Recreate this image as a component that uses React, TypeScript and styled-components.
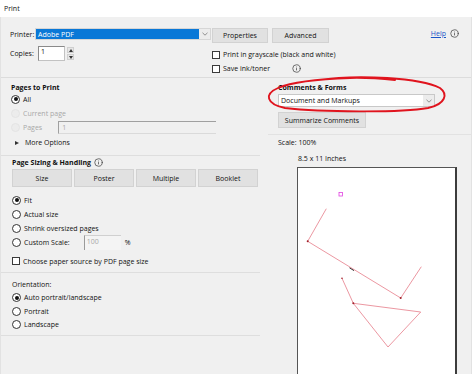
import styled, { createGlobalStyle } from "styled-components";
import { Info } from "lucide-react";

const GlobalStyle = createGlobalStyle`
    body {
        margin: 0;
        background: #ffffff;
        font-family: "Open Sans", "Noto Sans", sans-serif;
        font-size: 7px;
        color: #111111;
    }
`;

const Window = styled.div`
    width: 474px;
    height: 374px;
    position: relative;
    overflow: hidden;
    display: flex;
    flex-direction: column;
`;

const TitleBar = styled.div`
    height: 17px;
    line-height: 17px;
    padding-left: 4px;
`;

const Panel = styled.div`
    flex: 1;
    background: #f0f0f0;
    border-left: 1px solid #e2e2e2;
    border-right: 1px solid #e2e2e2;
    margin-right: 2px;
    display: flex;
    flex-direction: column;
`;

const TopSection = styled.div`
    height: 61px;
    border-bottom: 1px solid #dcdcdc;
    display: flex;
    box-sizing: border-box;
`;

const TopLeft = styled.div`
    width: 211px;
    padding: 11px 0 0 9px;
    box-sizing: border-box;
`;

const TopRight = styled.div`
    flex: 1;
    padding-top: 11px;
`;

const FieldRow = styled.div<{ $h: number; $mt?: number }>`
    display: flex;
    align-items: center;
    height: ${(p) => p.$h}px;
    margin-top: ${(p) => p.$mt || 0}px;
`;

const Label = styled.span<{ $w?: number }>`
    width: ${(p) => (p.$w ? `${p.$w}px` : "auto")};
    flex-shrink: 0;
    white-space: nowrap;
`;

const Select = styled.div<{ $w: number; $h: number; $active?: boolean }>`
    width: ${(p) => p.$w}px;
    height: ${(p) => p.$h}px;
    box-sizing: border-box;
    display: flex;
    align-items: stretch;
    background: #ffffff;
    border: 1px solid ${(p) => (p.$active ? "#d6d6d6" : "#c8c8c8")};
`;

const SelectValue = styled.div<{ $active?: boolean }>`
    flex: 1;
    display: flex;
    align-items: center;
    padding-left: 2px;
    background: ${(p) => (p.$active ? "#0a78d7" : "transparent")};
    color: ${(p) => (p.$active ? "#ffffff" : "#111111")};
    white-space: nowrap;
`;

const SelectArrow = styled.div`
    width: 11px;
    display: flex;
    align-items: center;
    justify-content: center;
    background: #ececec;
`;

const NumberBox = styled.div<{ $w: number; $h: number }>`
    width: ${(p) => p.$w}px;
    height: ${(p) => p.$h}px;
    box-sizing: border-box;
    border: 1px solid #c2c2c2;
    border-top-color: #8a8a8a;
    border-left-color: #8a8a8a;
    background: #ffffff;
    padding: 1px 0 0 2px;
    line-height: 8px;
`;

const Spinner = styled.div`
    display: flex;
    flex-direction: column;
    gap: 1px;
    margin-left: 2px;
`;

const SpinBtn = styled.div`
    width: 7px;
    height: 6px;
    background: #e6e6e6;
    border: 1px solid #cfcfcf;
    box-sizing: border-box;
    display: flex;
    align-items: center;
    justify-content: center;
`;

const Button = styled.div<{ $w: number; $h: number }>`
    width: ${(p) => p.$w}px;
    height: ${(p) => p.$h}px;
    box-sizing: border-box;
    background: #e1e1e1;
    border: 1px solid #d2d2d2;
    display: flex;
    align-items: center;
    justify-content: center;
    white-space: nowrap;
`;

const ButtonRow = styled.div<{ $gap: number }>`
    display: flex;
    align-items: center;
    gap: ${(p) => p.$gap}px;
`;

const HelpLink = styled.a`
    margin-left: auto;
    margin-right: 12px;
    align-self: flex-start;
    margin-top: 1px;
    color: #1a56c8;
    text-decoration: underline;
    display: flex;
    align-items: center;
    gap: 4px;
`;

const CheckList = styled.div`
    margin-top: 7px;
    display: flex;
    flex-direction: column;
    gap: 5px;
`;

const OptionRow = styled.div<{ $h?: number; $mt?: number; $disabled?: boolean }>`
    display: flex;
    align-items: center;
    gap: 3px;
    height: ${(p) => (p.$h ? `${p.$h}px` : "auto")};
    margin-top: ${(p) => p.$mt || 0}px;
    color: ${(p) => (p.$disabled ? "#a8a8a8" : "#111111")};
    white-space: nowrap;
`;

const CheckBox = styled.span`
    width: 8px;
    height: 8px;
    box-sizing: border-box;
    border: 1px solid #3a3a3a;
    background: #ffffff;
    flex-shrink: 0;
`;

const Radio = styled.span<{ $checked?: boolean; $disabled?: boolean }>`
    width: 9px;
    height: 9px;
    box-sizing: border-box;
    border-radius: 50%;
    border: 1px solid ${(p) => (p.$disabled ? "#e4e4e4" : "#333333")};
    background: ${(p) => (p.$disabled ? "#ececec" : "#ffffff")};
    flex-shrink: 0;
    display: flex;
    align-items: center;
    justify-content: center;
    &::after {
        content: "";
        width: 4px;
        height: 4px;
        border-radius: 50%;
        background: ${(p) => (p.$checked ? "#111111" : "transparent")};
    }
`;

const InfoIcon = styled(Info)`
    width: 9px;
    height: 9px;
    color: #444444;
    flex-shrink: 0;
`;

const Body = styled.div`
    flex: 1;
    display: flex;
    min-height: 0;
`;

const LeftColumn = styled.div`
    width: 259px;
    display: flex;
    flex-direction: column;
`;

const Section = styled.div<{ $pt: number; $pb: number }>`
    padding: ${(p) => p.$pt}px 0 ${(p) => p.$pb}px 10px;
    border-bottom: 1px solid #dedede;
`;

const SectionTitle = styled.div`
    font-weight: 700;
    height: 9px;
    line-height: 9px;
    display: flex;
    align-items: center;
    gap: 3px;
`;

const PlainTitle = styled.div`
    height: 9px;
    line-height: 9px;
`;

const PagesInput = styled.div`
    width: 158px;
    height: 13px;
    margin-left: 13px;
    box-sizing: border-box;
    border-top: 1px solid #a0a0a0;
    border-left: 1px solid #a0a0a0;
    border-bottom: 1px solid #dadada;
    color: #a8a8a8;
    padding: 1px 0 0 3px;
    line-height: 9px;
`;

const Triangle = styled.span`
    width: 0;
    height: 0;
    border-top: 2.5px solid transparent;
    border-bottom: 2.5px solid transparent;
    border-left: 4px solid #333333;
    margin: 0 3px 0 4px;
`;

const ScaleInput = styled.div`
    width: 37px;
    height: 15px;
    margin-left: 11px;
    box-sizing: border-box;
    border-left: 1px solid #9a9a9a;
    border-top: 1px solid #d0d0d0;
    background: #f4f4f4;
    color: #a8a8a8;
    padding: 1px 0 0 2px;
    line-height: 9px;
`;

const Percent = styled.span`
    margin-left: 1px;
`;

const RightColumn = styled.div`
    flex: 1;
    padding-left: 18px;
    overflow: hidden;
    display: flex;
    flex-direction: column;
    align-items: flex-start;
`;

const RightDivider = styled.div`
    align-self: stretch;
    margin: 6px 0 0 -10px;
    border-top: 1px solid #e2e2e2;
`;

const Caption = styled.div<{ $mt: number; $ml?: number }>`
    margin-top: ${(p) => p.$mt}px;
    margin-left: ${(p) => p.$ml || 0}px;
    height: 9px;
    line-height: 9px;
`;

const PreviewPage = styled.div`
    margin: 4px 0 0 19px;
    width: 160px;
    height: 215px;
    box-sizing: border-box;
    background: #ffffff;
    border: 1px solid #555555;
    border-right: 2px solid #3c3c3c;
    flex-shrink: 0;
`;

const Scribble = styled.svg`
    position: absolute;
    left: 0;
    top: 0;
    pointer-events: none;
`;

const Chevron = () => (
    <svg width="6" height="4" viewBox="0 0 6 4">
        <path d="M0.5 0.8 L3 3.2 L5.5 0.8" fill="none" stroke="#777" strokeWidth="0.8" />
    </svg>
);

const Arrow = ({ up }: { up?: boolean }) => (
    <svg width="4" height="3" viewBox="0 0 4 3">
        <path d={up ? "M0 3 L2 0 L4 3 Z" : "M0 0 L2 3 L4 0 Z"} fill="#333" />
    </svg>
);

const sizingButtons = ["Size", "Poster", "Multiple", "Booklet"];

function App() {
    return (
        <Window>
            <GlobalStyle />
            <TitleBar>Print</TitleBar>
            <Panel>
                <TopSection>
                    <TopLeft>
                        <FieldRow $h={12}>
                            <Label $w={25}>Printer:</Label>
                            <Select $w={176} $h={12} $active>
                                <SelectValue $active>Adobe PDF</SelectValue>
                                <SelectArrow>
                                    <Chevron />
                                </SelectArrow>
                            </Select>
                        </FieldRow>
                        <FieldRow $h={15} $mt={6}>
                            <Label $w={28}>Copies:</Label>
                            <NumberBox $w={27} $h={15}>1</NumberBox>
                            <Spinner>
                                <SpinBtn>
                                    <Arrow up />
                                </SpinBtn>
                                <SpinBtn>
                                    <Arrow />
                                </SpinBtn>
                            </Spinner>
                        </FieldRow>
                    </TopLeft>
                    <TopRight>
                        <ButtonRow $gap={4}>
                            <Button $w={56} $h={15}>Properties</Button>
                            <Button $w={57} $h={15}>Advanced</Button>
                            <HelpLink>
                                Help
                                <InfoIcon />
                            </HelpLink>
                        </ButtonRow>
                        <CheckList>
                            <OptionRow $h={9}>
                                <CheckBox />
                                <span>Print in grayscale (black and white)</span>
                            </OptionRow>
                            <OptionRow $h={9}>
                                <CheckBox />
                                <span>Save ink/toner</span>
                                <InfoIcon style={{ marginLeft: 19 }} />
                            </OptionRow>
                        </CheckList>
                    </TopRight>
                </TopSection>
                <Body>
                    <LeftColumn>
                        <Section $pt={5} $pb={5}>
                            <SectionTitle>Pages to Print</SectionTitle>
                            <OptionRow $h={14}>
                                <Radio $checked />
                                All
                            </OptionRow>
                            <OptionRow $h={14} $disabled>
                                <Radio $disabled />
                                Current page
                            </OptionRow>
                            <OptionRow $h={15} $disabled>
                                <Radio $disabled />
                                Pages
                                <PagesInput>1</PagesInput>
                            </OptionRow>
                            <OptionRow $h={15}>
                                <Triangle />
                                More Options
                            </OptionRow>
                        </Section>
                        <Section $pt={2} $pb={4} style={{ paddingLeft: 11 }}>
                            <SectionTitle>
                                Page Sizing &amp; Handling
                                <InfoIcon />
                            </SectionTitle>
                            <ButtonRow $gap={2} style={{ marginTop: 2 }}>
                                {sizingButtons.map((b) => (
                                    <Button key={b} $w={60} $h={18}>
                                        {b}
                                    </Button>
                                ))}
                            </ButtonRow>
                            <OptionRow $h={14} $mt={6}>
                                <Radio $checked />
                                Fit
                            </OptionRow>
                            <OptionRow $h={14}>
                                <Radio />
                                Actual size
                            </OptionRow>
                            <OptionRow $h={14}>
                                <Radio />
                                Shrink oversized pages
                            </OptionRow>
                            <OptionRow $h={15}>
                                <Radio />
                                Custom Scale:
                                <ScaleInput>100</ScaleInput>
                                <Percent>%</Percent>
                            </OptionRow>
                            <OptionRow $h={14} $mt={4}>
                                <CheckBox />
                                Choose paper source by PDF page size
                            </OptionRow>
                        </Section>
                        <Section $pt={7} $pb={3} style={{ paddingLeft: 11 }}>
                            <PlainTitle>Orientation:</PlainTitle>
                            <OptionRow $h={13.5} $mt={2}>
                                <Radio $checked />
                                Auto portrait/landscape
                            </OptionRow>
                            <OptionRow $h={13.5}>
                                <Radio />
                                Portrait
                            </OptionRow>
                            <OptionRow $h={13.5}>
                                <Radio />
                                Landscape
                            </OptionRow>
                        </Section>
                    </LeftColumn>
                    <RightColumn>
                        <SectionTitle style={{ marginTop: 5 }}>Comments &amp; Forms</SectionTitle>
                        <Select $w={157} $h={13} style={{ marginTop: 2 }}>
                            <SelectValue>Document and Markups</SelectValue>
                            <SelectArrow>
                                <Chevron />
                            </SelectArrow>
                        </Select>
                        <Button $w={88} $h={16} style={{ marginTop: 5 }}>
                            Summarize Comments
                        </Button>
                        <RightDivider />
                        <Caption $mt={3}>Scale: 100%</Caption>
                        <Caption $mt={7} $ml={20}>
                            8.5 x 11 Inches
                        </Caption>
                        <PreviewPage>
                            <svg width="157" height="212" viewBox="0 0 157 212">
                                <rect x="41" y="24.5" width="3.5" height="3.5" fill="none" stroke="#e040e0" strokeWidth="0.8" />
                                <g fill="none" stroke="#e26a78" strokeWidth="0.7">
                                    <polyline points="28.3,40.7 9.7,73.3 102.7,130 123.3,98.7" />
                                    <line x1="44" y1="110.3" x2="55.3" y2="135.3" />
                                    <polygon points="55.3,135.3 122.7,144 90,179" />
                                </g>
                                <line x1="51.5" y1="99.8" x2="56" y2="102.6" stroke="#333" strokeWidth="1" />
                                <g fill="#a0202a">
                                    <circle cx="9.7" cy="73.3" r="1" />
                                    <circle cx="102.7" cy="130" r="1" />
                                    <circle cx="55.3" cy="135.3" r="1" />
                                    <circle cx="44" cy="110.3" r="0.8" />
                                </g>
                            </svg>
                        </PreviewPage>
                    </RightColumn>
                </Body>
            </Panel>
            <Scribble width="474" height="374" viewBox="0 0 474 374">
                <path
                    d="M318 80 C 360 74, 420 78, 440 88 C 448 94, 446 104, 428 108 C 400 113, 320 112, 285 108 C 266 104, 264 94, 278 88 C 292 82, 320 79, 350 78 C 370 77.5, 385 79, 395 80"
                    fill="none"
                    stroke="#e0141e"
                    strokeWidth="1.9"
                    strokeLinecap="round"
                />
            </Scribble>
        </Window>
    );
}

export default App;
